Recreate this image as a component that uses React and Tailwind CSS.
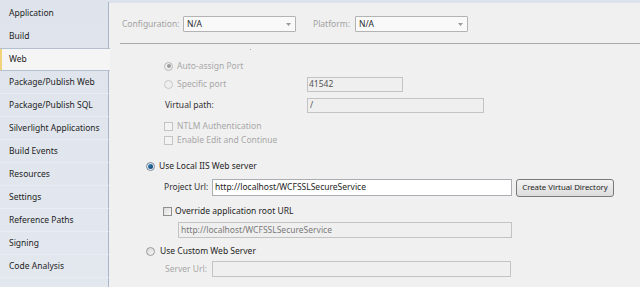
import React from "react";

const font = { fontFamily: '"Noto Sans", "Open Sans", sans-serif' };

const tabs = [
  "Application",
  "Build",
  "Web",
  "Package/Publish Web",
  "Package/Publish SQL",
  "Silverlight Applications",
  "Build Events",
  "Resources",
  "Settings",
  "Reference Paths",
  "Signing",
  "Code Analysis",
];

function Tab({ label, index }) {
  const selected = label === "Web";
  if (selected) {
    return (
      <div className="relative h-[23px] flex items-center pl-[9px] bg-[#f5f5f5] border-y border-[#b4bfcf] w-[110px] -mr-[1px] z-10">
        <div className="absolute left-0 top-0 bottom-0 w-[2px] bg-[#f3d27c]" />
        <span className="text-[#1e1e1e]">{label}</span>
      </div>
    );
  }
  const below = index > 2;
  return (
    <div
      className={
        "h-[23px] flex items-center pl-[9px] border-r border-[#a9b6c9] " +
        (below ? "border-b border-b-[#e9edf3]" : "")
      }
    >
      <span className="text-[#1e1e1e] whitespace-nowrap">{label}</span>
    </div>
  );
}

function Radio({ state }) {
  if (state === "disabledOn") {
    return (
      <div className="w-[9px] h-[9px] rounded-full border border-[#b9b9b9] bg-[#efefef] flex items-center justify-center shrink-0">
        <div className="w-[4px] h-[4px] rounded-full bg-[#9c9c9c]" />
      </div>
    );
  }
  if (state === "on") {
    return (
      <div className="w-[9px] h-[9px] rounded-full border border-[#7d8a99] bg-gradient-to-b from-[#d9e4ee] to-[#f5f8fb] flex items-center justify-center shrink-0">
        <div className="w-[5px] h-[5px] rounded-full bg-gradient-to-br from-[#3f8ac2] to-[#0d3e6b]" />
      </div>
    );
  }
  if (state === "disabledOff") {
    return (
      <div className="w-[9px] h-[9px] rounded-full border border-[#c8c8c8] bg-[#efefef] shrink-0" />
    );
  }
  return (
    <div className="w-[9px] h-[9px] rounded-full border border-[#9a9a9a] bg-gradient-to-br from-[#d8d8d8] to-[#f6f6f6] shrink-0" />
  );
}

function Check({ disabled }) {
  return (
    <div
      className={
        "w-[9px] h-[9px] border shrink-0 " +
        (disabled
          ? "border-[#c4c4c4] bg-[#f3f3f3]"
          : "border-[#8f8f8f] bg-gradient-to-br from-[#dcdcdc] to-[#f8f8f8]")
      }
    />
  );
}

function Select() {
  return (
    <div className="w-[113px] h-[16px] border border-[#b3b3b3] bg-[#f9f9f9] flex items-center pl-[3px] pr-[3px] rounded-[1px]">
      <span className="text-[#2a2a2a] flex-1">N/A</span>
      <svg width="5" height="3" viewBox="0 0 5 3" className="mr-[1px]">
        <path d="M0 0 H5 L2.5 3 Z" fill="#9a9a9a" />
      </svg>
    </div>
  );
}

export default function App() {
  return (
    <div
      className="w-[640px] h-[287px] flex overflow-hidden bg-[#f0f0f0] text-[8.5px] leading-none"
      style={font}
    >
      <aside className="w-[109px] shrink-0 flex flex-col pt-[2px] bg-gradient-to-b from-[#dfe4ec] to-[#e3e7ee]">
        {tabs.map((t, i) => (
          <Tab key={t} label={t} index={i} />
        ))}
        <div className="flex-1 border-r border-[#a9b6c9]" />
      </aside>

      <main className="flex-1 flex flex-col border-t-[3px] border-[#dde3ec]">
        {/* Config row */}
        <div className="mt-[13px] h-[16px] flex items-center pl-[13px]">
          <span className="w-[61px] text-[#a2a2a2]">Configuration:</span>
          <Select />
          <span className="ml-[17px] w-[42px] text-[#a2a2a2]">Platform:</span>
          <Select />
        </div>

        <div className="mt-[11px] ml-[11px] border-t border-[#a9a9a9]" />
        <div className="ml-[141px] mt-[5px] w-[1px] h-[1px] bg-[#9aa5b5]" />

        {/* Auto assign */}
        <div className="mt-[10px] h-[12px] flex items-center pl-[55px] gap-[4px]">
          <Radio state="disabledOn" />
          <span className="text-[#a8a8a8]">Auto-assign Port</span>
        </div>

        {/* Specific port */}
        <div className="mt-[5px] h-[15px] flex items-center pl-[55px]">
          <div className="w-[143px] flex items-center gap-[4px]">
            <Radio state="disabledOff" />
            <span className="text-[#a8a8a8]">Specific port</span>
          </div>
          <div className="w-[96px] h-[15px] border border-[#c3c3c3] bg-[#efefef] flex items-center pl-[1px] text-[#555]">
            41542
          </div>
        </div>

        {/* Virtual path */}
        <div className="mt-[6px] h-[15px] flex items-center pl-[56px]">
          <span className="w-[142px] text-[#333]">Virtual path:</span>
          <div className="w-[177px] h-[15px] border border-[#c3c3c3] bg-[#efefef] flex items-center pl-[2px] text-[#555]">
            /
          </div>
        </div>

        {/* NTLM */}
        <div className="mt-[7px] h-[13px] flex items-center pl-[55px] gap-[4px]">
          <Check disabled />
          <span className="text-[#a8a8a8]">NTLM Authentication</span>
        </div>
        <div className="mt-[1px] h-[13px] flex items-center pl-[55px] gap-[4px]">
          <Check disabled />
          <span className="text-[#a8a8a8]">Enable Edit and Continue</span>
        </div>

        {/* Use local IIS */}
        <div className="mt-[13px] h-[12px] flex items-center pl-[37px] gap-[4px]">
          <Radio state="on" />
          <span className="text-[#1e1e1e]">Use Local IIS Web server</span>
        </div>

        {/* Project Url */}
        <div className="mt-[6px] h-[19px] flex items-center pl-[55px]">
          <span className="w-[48px] text-[#333]">Project Url:</span>
          <div className="w-[300px] h-[17px] border border-[#abadb3] bg-white flex items-center pl-[2px] text-[#1e1e1e]">
            http://localhost/WCFSSLSecureService
          </div>
          <button className="ml-[4px] w-[98px] h-[18px] rounded-[3px] border border-[#7a7a7a] bg-gradient-to-b from-[#f3f3f3] to-[#dcdcdc] text-[#1e1e1e] text-[7.8px] flex items-center justify-center whitespace-nowrap">
            Create Virtual Directory
          </button>
        </div>

        {/* Override */}
        <div className="mt-[8px] h-[13px] flex items-center pl-[54px] gap-[3px]">
          <Check />
          <span className="text-[#1e1e1e]">Override application root URL</span>
        </div>

        <div className="mt-[4px] ml-[69px] w-[334px] h-[16px] border border-[#c3c3c3] bg-[#efefef] flex items-center pl-[2px] text-[#7a7a7a]">
          http://localhost/WCFSSLSecureService
        </div>

        {/* Use custom */}
        <div className="mt-[7px] h-[12px] flex items-center pl-[37px] gap-[5px]">
          <Radio state="off" />
          <span className="text-[#1e1e1e]">Use Custom Web Server</span>
        </div>

        {/* Server Url */}
        <div className="mt-[4px] h-[16px] flex items-center pl-[56px]">
          <span className="w-[47px] text-[#a8a8a8]">Server Url:</span>
          <div className="w-[299px] h-[16px] border border-[#c3c3c3] bg-[#efefef]" />
        </div>
      </main>
    </div>
  );
}
